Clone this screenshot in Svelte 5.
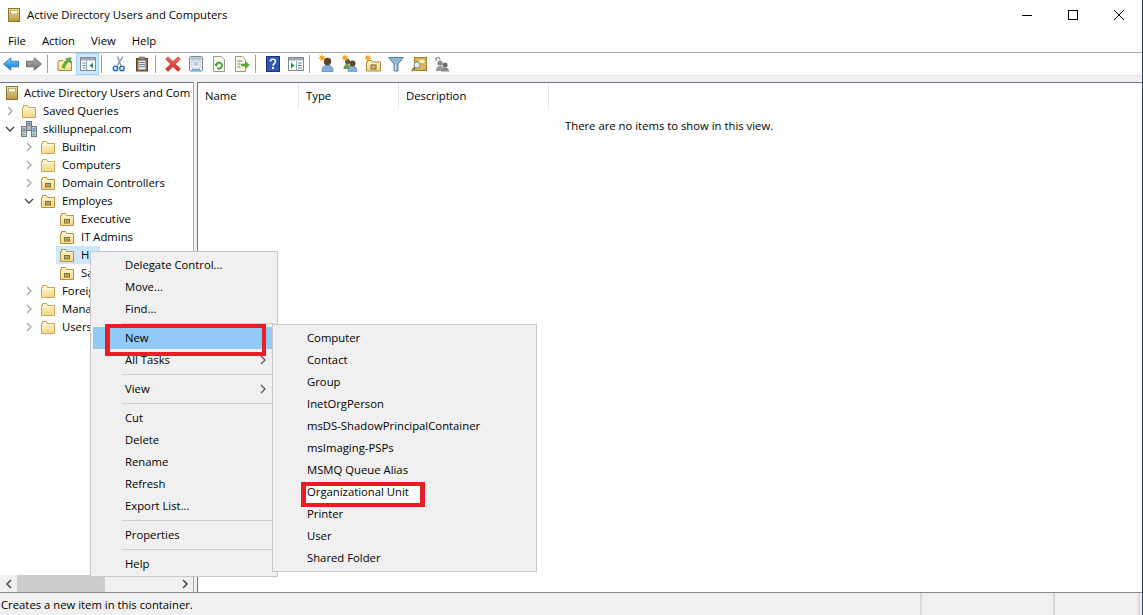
<script>
  const menus = ['File', 'Action', 'View', 'Help'];
  const toolbar = [
    'back', 'forward', '|', 'up', 'tree', '|', 'cut', 'paste', '|', 'del', 'props', 'refresh', 'export', '|',
    'help', 'view', '|', 'newuser', 'newgroup', 'newou', 'filter', 'find', 'addgroup'
  ];
  const starred = { newuser: 'person', newgroup: 'group', newou: 'newou' };
  const tree = [
    { label: 'Saved Queries', level: 1, arrow: 'closed', icon: 'folder' },
    { label: 'skillupnepal.com', level: 1, arrow: 'open', icon: 'domain' },
    { label: 'Builtin', level: 2, arrow: 'closed', icon: 'folder' },
    { label: 'Computers', level: 2, arrow: 'closed', icon: 'folder' },
    { label: 'Domain Controllers', level: 2, arrow: 'closed', icon: 'ou' },
    { label: 'Employes', level: 2, arrow: 'open', icon: 'ou' },
    { label: 'Executive', level: 3, icon: 'ou' },
    { label: 'IT Admins', level: 3, icon: 'ou' },
    { label: 'HR', level: 3, icon: 'ou', selected: true },
    { label: 'Sales', level: 3, icon: 'ou' },
    { label: 'Foreign Security Principals', level: 2, arrow: 'closed', icon: 'folder' },
    { label: 'Managed Service Accounts', level: 2, arrow: 'closed', icon: 'folder' },
    { label: 'Users', level: 2, arrow: 'closed', icon: 'folder' }
  ];
  const contextMenu = [
    ['Delegate Control...'], ['Move...'], ['Find...'], '-',
    ['New', 'active'], ['All Tasks', 'sub'], '-',
    ['View', 'sub'], '-',
    ['Cut'], ['Delete'], ['Rename'], ['Refresh'], ['Export List...'], '-',
    ['Properties'], '-', ['Help']
  ];
  const subMenu = [
    'Computer', 'Contact', 'Group', 'InetOrgPerson', 'msDS-ShadowPrincipalContainer',
    'msImaging-PSPs', 'MSMQ Queue Alias', 'Organizational Unit', 'Printer', 'User', 'Shared Folder'
  ];
  const columns = [
    { name: 'Name', cls: 'c1' }, { name: 'Type', cls: 'c2' }, { name: 'Description', cls: 'c3' }
  ];
</script>

<svg class="defs" width="0" height="0" aria-hidden="true">
  <defs>
    <linearGradient id="gBook" x1="0" y1="0" x2="0" y2="1"><stop offset="0" stop-color="#f3e6a8"/><stop offset="1" stop-color="#b8953c"/></linearGradient>
    <linearGradient id="gFolder" x1="0" y1="0" x2="0" y2="1"><stop offset="0" stop-color="#fff6d2"/><stop offset="1" stop-color="#f6d685"/></linearGradient>
    <linearGradient id="gBlue" x1="0" y1="0" x2="0" y2="1"><stop offset="0" stop-color="#a4dcfa"/><stop offset=".5" stop-color="#3fa0e6"/><stop offset="1" stop-color="#1c78c8"/></linearGradient>
    <linearGradient id="gGray" x1="0" y1="0" x2="0" y2="1"><stop offset="0" stop-color="#b5b5b5"/><stop offset="1" stop-color="#6f6f6f"/></linearGradient>
    <linearGradient id="gRed" x1="0" y1="0" x2="0" y2="1"><stop offset="0" stop-color="#f2685c"/><stop offset="1" stop-color="#cf2a20"/></linearGradient>
    <symbol id="book" viewBox="0 0 16 16">
      <rect x="2.500" y="1.500" width="11" height="13" fill="url(#gBook)" stroke="#8f7430"/>
      <rect x="4.500" y="3.500" width="7" height="3.500" fill="#fffbe6" stroke="#a88d45" stroke-width=".6"/>
    </symbol>
    <symbol id="folder" viewBox="0 0 16 16">
      <path d="M1.500 14.500v-10h1v-2h4l1 2h7v10z" fill="url(#gFolder)" stroke="#cba556"/>
      <path d="M2.500 5.500h11" stroke="#fffbe8"/>
    </symbol>
    <symbol id="ou" viewBox="0 0 16 16">
      <path d="M1.500 14.500v-10h1v-2h4l1 2h7v10z" fill="url(#gFolder)" stroke="#b8923f"/>
      <path d="M2.500 5.500h11" stroke="#fff6d8"/>
      <rect x="5.500" y="8.500" width="5" height="3.500" fill="#dcb962" stroke="#7f6c35"/>
      <rect x="7" y="9.700" width="2" height="1" fill="#5a8a3a"/>
    </symbol>
    <symbol id="domain" viewBox="0 0 16 16">
      <rect x="5.500" y=".5" width="5" height="9" fill="#aeb9c2" stroke="#6b7a86"/>
      <rect x=".5" y="5.500" width="5" height="10" fill="#c1cad1" stroke="#6b7a86"/>
      <rect x="10.500" y="5.500" width="5" height="10" fill="#c1cad1" stroke="#6b7a86"/>
      <path d="M1.500 8h3M1.500 10h3M11.500 8h3M11.500 10h3M6.500 2.500h3M6.500 4.500h3" stroke="#5f6f7b"/>
      <path d="M1.500 13.500h2M11.500 13.500h2" stroke="#3fcf3f" stroke-width="1.400"/>
    </symbol>
    <symbol id="back" viewBox="0 0 16 16"><path d="M.5 8 7.800 1.800v3.400h7.700v5.600H7.800v3.400z" fill="url(#gBlue)" stroke="#1869ad" stroke-width=".8"/></symbol>
    <symbol id="forward" viewBox="0 0 16 16"><path d="M15.500 8 8.200 1.800v3.400H.5v5.600h7.700v3.400z" fill="url(#gGray)" stroke="#5f5f5f" stroke-width=".8"/></symbol>
    <symbol id="up" viewBox="0 0 16 16">
      <path d="M1 14.500v-9h1v-1h4l1 1h7.500v9z" fill="url(#gFolder)" stroke="#b08a3c"/>
      <path d="M5 11c1-3 2.500-5 5-6L8.500 3 14 1.500 13.500 7 12 5.500C10 7 8 9 7.500 12.500z" fill="#5cb531" stroke="#3b8420" stroke-width=".5"/>
    </symbol>
    <symbol id="tree" viewBox="0 0 16 16">
      <rect x=".5" y="1.500" width="15" height="13" fill="#fff" stroke="#7d8790"/>
      <rect x="1" y="2" width="14" height="2.500" fill="#9ea8b1"/>
      <path d="M6.500 5v9" stroke="#9ea8b1"/>
      <path d="M2.500 7h3M2.500 9.500h3M2.500 12h3" stroke="#4a7fb5"/>
      <path d="M13 6.500v6l-3.500-3z" fill="#1f9a5a"/>
    </symbol>
    <symbol id="view" viewBox="0 0 16 16">
      <rect x=".5" y="1.500" width="15" height="13" fill="#fff" stroke="#7d8790"/>
      <rect x="1" y="2" width="14" height="2.500" fill="#9ea8b1"/>
      <path d="M8.500 5v9" stroke="#9ea8b1"/>
      <path d="M3 6.500v6l3.500-3z" fill="#1f9a3a"/>
      <path d="M10 7h4M10 9.500h4M10 12h4" stroke="#4a7fb5"/>
    </symbol>
    <symbol id="cut" viewBox="0 0 16 16">
      <path d="M12 .5 6 10M6.500 .5 10 10" stroke="#8b97a3" stroke-width="1.400" fill="none"/>
      <circle cx="4.500" cy="12.500" r="2.200" fill="none" stroke="#1f6fd0" stroke-width="1.500"/>
      <circle cx="11" cy="12.500" r="2.200" fill="none" stroke="#1f6fd0" stroke-width="1.500"/>
    </symbol>
    <symbol id="paste" viewBox="0 0 16 16">
      <rect x="2.500" y="2.500" width="11" height="12.500" fill="#8a6a45" stroke="#5e452a"/>
      <rect x="4.500" y="4.500" width="7" height="9" fill="#d7e6f5"/>
      <path d="M5 6.500h6M5 8.500h6M5 10.500h6" stroke="#6f8aa5"/>
      <rect x="5.500" y="1" width="5" height="2.500" fill="#9a9a9a" stroke="#555" stroke-width=".6"/>
    </symbol>
    <symbol id="del" viewBox="0 0 16 16"><path d="M3 .8 8 5.500 13 .8l2.500 2.200L10.500 8l5 5-2.500 2.500-5-5-5 5L.5 13l5-5L.5 3z" fill="url(#gRed)" stroke="#b5281f" stroke-width=".5"/></symbol>
    <symbol id="props" viewBox="0 0 16 16">
      <rect x="1.500" y=".5" width="13" height="14.500" rx="1" fill="#eef1f4" stroke="#7d8790"/>
      <rect x="2.500" y="1.500" width="11" height="2" fill="#aab4bd"/>
      <rect x="4" y="5" width="8" height="7" fill="#fff" stroke="#9aa5ae" stroke-width=".6"/>
      <path d="M5.500 7h5M5.500 9h5" stroke="#7d98b3"/>
      <path d="M4 13.800h8" stroke="#38a6e0" stroke-width="1.200"/>
    </symbol>
    <symbol id="refresh" viewBox="0 0 16 16">
      <path d="M2.500 .5h8l3 3v12h-11z" fill="#f8f8f4" stroke="#9a9a90"/>
      <path d="M5 9.500a3 3 0 1 1 1.500 2.600" fill="none" stroke="#3aa31f" stroke-width="1.800"/>
      <path d="M3.500 8h3.500l-1.500 3z" fill="#3aa31f"/>
    </symbol>
    <symbol id="export" viewBox="0 0 16 16">
      <path d="M1.500 .5h7l3 3v12h-10z" fill="#fbf7e6" stroke="#9a9a80"/>
      <path d="M3.500 5h5M3.500 8h3M3.500 11h3" stroke="#7a7a68"/>
      <path d="M7.500 8h4V5.500l4 3.500-4 3.500V10h-4z" fill="#58b52e" stroke="#3d8a1e" stroke-width=".5"/>
    </symbol>
    <symbol id="help" viewBox="0 0 16 16">
      <rect x="1.500" y=".5" width="13" height="15" fill="#2f55b5" stroke="#1c347f"/>
      <path d="M5.500 5.500c0-3 5-3 5 0 0 2-2.500 2-2.500 4.300" fill="none" stroke="#fff" stroke-width="1.700"/>
      <rect x="7" y="11" width="2" height="2" fill="#fff"/>
    </symbol>
    <symbol id="person" viewBox="0 0 16 16">
      <path d="M3 15.500c0-5 2.500-6.500 5.500-6.500s5.500 1.500 5.500 6.500z" fill="#7fb0dc" stroke="#41749f" stroke-width=".6"/>
      <circle cx="8.500" cy="5.500" r="3.700" fill="#5b4330"/>
    </symbol>
    <symbol id="star" viewBox="0 0 8 8"><path d="M4 0l.9 2.400L7.500 1.500 5.900 3.500 8 4.800 5.300 5 5 8 4 5.500 2.300 7.300 2.600 4.900 0 4.300 2.300 3.200.8 1 3.200 2.200z" fill="#f5a623"/></symbol>
    <symbol id="group" viewBox="0 0 16 16">
      <path d="M1.500 13c0-3 1.500-5 3.500-5s3.500 2 3.500 5z" fill="#6e9a52"/>
      <circle cx="5.500" cy="5.500" r="2.600" fill="#6b5a3c"/>
      <path d="M6 15.500c0-4 2-5.500 4.500-5.500s4.500 1.500 4.500 5.500z" fill="#7fb0dc" stroke="#41749f" stroke-width=".5"/>
      <circle cx="10.500" cy="7.500" r="3" fill="#5b4330"/>
    </symbol>
    <symbol id="newou" viewBox="0 0 16 16">
      <path d="M1.500 15v-9h1V4.500h4l1 1.500h8v9z" fill="url(#gFolder)" stroke="#b08a3c"/>
      <rect x="6" y="9" width="5" height="4" fill="#d9b560" stroke="#7b6a35"/>
    </symbol>
    <symbol id="filter" viewBox="0 0 16 16">
      <path d="M.5 1.500h15L10 8v7H6V8z" fill="#8fb9d6" stroke="#5b7f99"/>
      <path d="M7.500 8.500v6" stroke="#d8ebf6"/>
    </symbol>
    <symbol id="find" viewBox="0 0 16 16">
      <rect x="3.500" y="1.500" width="12" height="13" fill="#d8b657" stroke="#9a7f30"/>
      <rect x="8.500" y="4" width="5" height="3" fill="#fff7da"/>
      <circle cx="6" cy="9" r="3" fill="#e5f1fa" stroke="#7f8f9a"/>
      <path d="M4 11 .8 14.800" stroke="#8a6f3a" stroke-width="1.800"/>
    </symbol>
    <symbol id="addgroup" viewBox="0 0 16 16">
      <circle cx="6" cy="7" r="2.600" fill="#8a8a8a"/>
      <path d="M2 15c0-3.500 2-5 4-5s4 1.500 4 5z" fill="#9a9a9a"/>
      <circle cx="11" cy="9" r="2.600" fill="#6f6f6f"/>
      <path d="M7 15.500c0-3 2-4 4-4s4 1 4 4z" fill="#8a8a8a"/>
      <path d="M2 5V3.500a2 2 0 0 1 4 0" fill="none" stroke="#777" stroke-width="1.200"/>
    </symbol>
  </defs>
</svg>

{#snippet icon(name, size = 16)}
  <svg class="ico" width={size} height={size} aria-hidden="true"><use href="#{name}" /></svg>
{/snippet}

{#snippet chevron(kind)}
  <svg class="chev" width="10" height="10" viewBox="0 0 10 10" aria-hidden="true">
    {#if kind === 'open'}
      <path d="M1 3l4 4 4-4" fill="none" stroke="#444" stroke-width="1.300"/>
    {:else if kind === 'closed'}
      <path d="M3 1l4 4-4 4" fill="none" stroke="#a6a6a6" stroke-width="1.300"/>
    {/if}
  </svg>
{/snippet}

<div class="win">
  <header class="title">
    <span class="title-ico">{@render icon('book', 16)}</span>
    <span class="title-text">Active Directory Users and Computers</span>
    <div class="caption">
      <button class="cap" aria-label="Minimize"><svg width="12" height="12"><path d="M1 6.500h10" stroke="#000"/></svg></button>
      <button class="cap" aria-label="Maximize"><svg width="12" height="12"><rect x="1.500" y="1.500" width="9" height="9" fill="none" stroke="#000"/></svg></button>
      <button class="cap" aria-label="Close"><svg width="12" height="12"><path d="M1 1l10 10M11 1 1 11" stroke="#000"/></svg></button>
    </div>
  </header>

  <nav class="menubar">
    {#each menus as m}<span class="menu-item">{m}</span>{/each}
  </nav>

  <div class="toolbar">
    {#each toolbar as t}
      {#if t === '|'}
        <span class="sep"></span>
      {:else if starred[t]}
        <span class="tb"><span class="stack">{@render icon(starred[t])}<svg class="star" width="8" height="8"><use href="#star"/></svg></span></span>
      {:else}
        <span class="tb" class:on={t === 'tree'}>{@render icon(t)}</span>
      {/if}
    {/each}
  </div>
  <div class="band"></div>

  <main class="main">
    <section class="left">
      <div class="tree">
        <div class="row root">
          {@render icon('book', 16)}
          <span class="label">Active Directory Users and Com</span>
        </div>
        {#each tree as n}
          <div class="row lv{n.level}">
            <span class="arrow">{#if n.arrow}{@render chevron(n.arrow)}{/if}</span>
            <span class="node" class:sel={n.selected}>
              {@render icon(n.icon)}
              <span class="label">{n.label}</span>
            </span>
          </div>
        {/each}
      </div>
      <div class="hscroll">
        <span class="sb-btn"><svg width="8" height="10"><path d="M6 1 2 5l4 4" fill="none" stroke="#444" stroke-width="1.500"/></svg></span>
        <div class="track"><div class="thumb"></div></div>
        <span class="sb-btn"><svg width="8" height="10"><path d="M2 1l4 4-4 4" fill="none" stroke="#444" stroke-width="1.500"/></svg></span>
      </div>
    </section>

    <div class="split"></div>

    <section class="right">
      <div class="head">
        {#each columns as c}<span class="col {c.cls}">{c.name}</span>{/each}
      </div>
      <p class="empty">There are no items to show in this view.</p>
    </section>
  </main>

  <footer class="status">
    <span class="st st1">Creates a new item in this container.</span>
    <span class="st st2"></span>
    <span class="st st3"></span>
  </footer>

  <div class="ctx">
    {#each contextMenu as item}
      {#if item === '-'}
        <div class="ctx-sep"></div>
      {:else}
        <div class="ctx-item" class:active={item[1] === 'active'}>
          <span class="txt">{item[0]}</span>
          {#if item[1] === 'sub'}<svg class="subarrow" width="6" height="10"><path d="M1 1l4 4-4 4" fill="none" stroke="#555" stroke-width="1.200"/></svg>{/if}
        </div>
      {/if}
    {/each}
  </div>

  <div class="sub">
    {#each subMenu as s}<div class="sub-item"><span class="txt">{s}</span></div>{/each}
  </div>

  <div class="mark mark-new"></div>
  <div class="mark mark-ou"></div>
</div>

<style>
  :global(body) { margin: 0; background: #fff; }
  .defs { position: absolute; }
  .win {
    position: relative;
    width: 1143px;
    height: 615px;
    overflow: hidden;
    display: flex;
    flex-direction: column;
    background: #fff;
    font: 11.3px/16px "Open Sans", "Noto Sans", sans-serif;
    color: #000;
    border-right: 1px solid #2f4256;
    box-sizing: border-box;
  }
  .ico { display: block; flex: none; }

  .title { height: 30px; display: flex; align-items: center; padding-left: 6px; flex: none; }
  .title-ico { margin-right: 5px; }
  .title-text { flex: 1; }
  .caption { display: flex; align-self: flex-start; }
  .cap { width: 46px; height: 30px; border: 0; padding: 0; background: none; display: flex; align-items: center; justify-content: center; }

  .menubar { height: 22px; display: flex; gap: 16px; padding-left: 8px; align-items: center; flex: none; border-bottom: 1px solid #ababab; }

  .toolbar { height: 22px; display: flex; flex: none; align-items: center; margin-left: -1px; }
  .tb { width: 23px; height: 22px; display: flex; align-items: center; justify-content: center; box-sizing: border-box; }
  .tb.on { background: #cce8ff; border: 1px solid #99d1ff; }
  .sep { height: 18px; box-sizing: border-box; border-left: 1px solid #a0a0a0; margin-left: 2px; width: 6px; }
  .stack { position: relative; display: block; }
  .star { position: absolute; left: -1px; top: -2px; }
  .band { height: 7px; flex: none; background: #f0f0f0; border-top: 1px solid #e4e4e4; box-sizing: border-box; }

  .main { flex: 1; min-height: 0; display: flex; background: #f0f0f0; }
  .left { width: 194px; flex: none; display: flex; flex-direction: column; background: #fff; border-top: 1px solid #6d7986; border-right: 1px solid #a5acb3; box-sizing: border-box; }
  .split { width: 3px; flex: none; }
  .right { flex: 1; background: #fff; border-top: 1px solid #6d7986; border-left: 1px solid #6d7986; }

  .tree { flex: 1; overflow: hidden; padding-top: 1px; }
  .row { height: 18px; display: flex; align-items: center; white-space: nowrap; }
  .root { padding-left: 4px; gap: 4px; }
  .arrow { width: 10px; height: 10px; flex: none; margin-right: 3px; }
  .chev { display: block; }
  .lv1 { padding-left: 5px; }
  .lv2 { padding-left: 24px; }
  .lv3 { padding-left: 43px; }
  .node { display: flex; align-items: center; height: 18px; padding-left: 3px; padding-right: 4px; }
  .node .label { margin-left: 6px; }
  .node.sel { background: #cce8ff; }

  .hscroll { height: 17px; flex: none; display: flex; background: #f0f0f0; }
  .sb-btn { width: 17px; display: flex; align-items: center; justify-content: center; flex: none; }
  .track { flex: 1; }
  .thumb { width: 88px; height: 100%; background: #cdcdcd; }

  .head { height: 25px; display: flex; align-items: center; }
  .col { box-sizing: border-box; padding-left: 7px; height: 25px; line-height: 26px; border-right: 1px solid #e5e5e5; }
  .c1 { width: 101px; }
  .c2 { width: 100px; }
  .c3 { width: 150px; }
  .empty { margin: 10px 0 0; padding-left: 367px; }

  .status { height: 23px; flex: none; display: flex; background: #f0f0f0; border-top: 1px solid #868c94; box-sizing: border-box; line-height: 24px; }
  .st { box-sizing: border-box; height: 100%; border-right: 2px solid #d9d9d9; }
  .st1 { width: 922px; padding-left: 1px; }
  .st2 { width: 133px; }
  .st3 { width: 85px; }

  .ctx, .sub {
    position: absolute;
    box-sizing: border-box;
    background: #f0f0f0;
    border: 1px solid #c8c8c8;
    padding: 2px;
  }
  .ctx { left: 90px; top: 251px; width: 188px; height: 326px; }
  .sub { left: 272px; top: 324px; width: 265px; height: 248px; }
  .ctx-item, .sub-item { height: 22px; line-height: 22px; display: flex; align-items: center; justify-content: space-between; white-space: nowrap; }
  .ctx-item { padding: 0 9px 0 32px; }
  .sub-item { padding-left: 32px; }
  .txt { position: relative; z-index: 2; }
  .ctx-item.active { background: #91c9f7; }
  .ctx-sep { height: 7px; margin: 0 0 0 29px; position: relative; }
  .ctx-sep::after { content: ""; position: absolute; left: 0; right: 0; top: 3px; height: 1px; background: #cfcfcf; }
  .subarrow { display: block; }

  .mark { position: absolute; box-sizing: border-box; border: 4px solid #ed1c24; pointer-events: none; z-index: 1; }
  .mark-new { left: 105px; top: 324px; width: 161px; height: 32px; border-width: 4px 4px 4px 5px; }
  .mark-ou { left: 301px; top: 482px; width: 124px; height: 25px; border-width: 4px 5px 4px 5px; background: #fff; }
</style>
